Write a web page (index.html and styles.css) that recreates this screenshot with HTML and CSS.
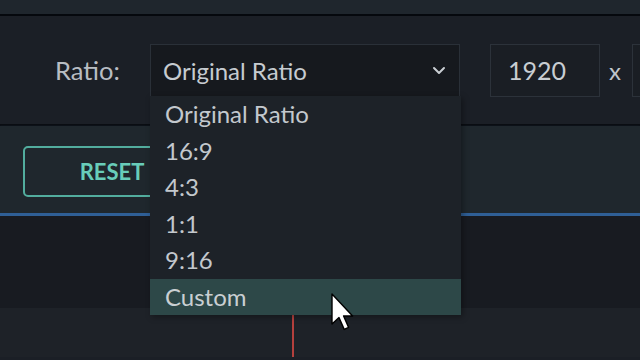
FILE: index.html
```html
<!DOCTYPE html>
<html>
  <head>
    <meta charset="utf-8">
    <title>Export settings</title>
    <link rel="stylesheet" href="styles.css">
  </head>
  <body>
    <div class="app">
      <div class="topbar"></div>

      <div class="panel">
        <span class="label">Ratio:</span>
        <div class="select">
          <span>Original Ratio</span>
          <svg class="chevron" width="14" height="9" viewBox="0 0 14 9">
            <path d="M2 2 L7 7 L12 2" fill="none" stroke="#c9ced3" stroke-width="2" stroke-linecap="round" stroke-linejoin="round"/>
          </svg>
        </div>
        <div class="num">1920</div>
        <span class="times">x</span>
        <div class="num"></div>
      </div>

      <div class="tools">
        <button class="reset">RESET</button>
      </div>
      <div class="timeline"></div>
      <div class="track">
        <div class="playhead"></div>
      </div>

      <!-- open dropdown list of the ratio select -->
      <ul class="menu">
        <li>Original Ratio</li>
        <li>16:9</li>
        <li>4:3</li>
        <li>1:1</li>
        <li>9:16</li>
        <li class="hover">Custom</li>
      </ul>

      <svg class="cursor" width="24" height="38" viewBox="0 0 12 19">
        <path d="M0.5 0.5 L0.5 15.5 L4 12.3 L6.6 18.2 L8.8 17.2 L6.3 11.5 L10.8 11.5 Z" fill="#fff" stroke="#000" stroke-width="0.7" stroke-linejoin="round"/>
      </svg>
    </div>
  </body>
</html>
```

FILE: styles.css
```css
body {
    margin: 0;
    background-color: #1b1f26;
    font-family: Lato, "Open Sans", sans-serif;
    overflow: hidden;
}

.app {
    position: relative;
    width: 640px;
    height: 360px;
    overflow: hidden;
}

.topbar {
    height: 14px;
    background-color: #1f262d;
    border-bottom: 2px solid #05080d;
}

.panel {
    display: flex;
    align-items: center;
    height: 108px;
    padding-left: 55px;
    background-color: #1b1f26;
    border-bottom: 2px solid #0b0e13;
}

.panel > * {
    flex-shrink: 0;
}

.label {
    width: 95px;
    font-size: 25.5px;
    color: #b8bdc3;
}

.select {
    display: flex;
    align-items: center;
    justify-content: space-between;
    box-sizing: border-box;
    width: 310px;
    height: 53px;
    padding: 0 12px 0 12px;
    background-color: #16191e;
    border: 1px solid #2a3038;
    font-size: 24px;
    color: #c6cbd0;
}

.chevron {
    margin-right: 1px;
}

.num {
    box-sizing: border-box;
    width: 110px;
    height: 53px;
    margin-left: 30px;
    padding-left: 17px;
    line-height: 51px;
    background-color: #1a1e24;
    border: 1px solid #2c323a;
    font-size: 25px;
    color: #c8cdd2;
}

.times {
    margin: 0 11px 0 9px;
    font-size: 24px;
    color: #c0c5cb;
}

.times + .num {
    margin-left: 0;
}

.tools {
    height: 90px;
    padding: 20px 0 0 23px;
    box-sizing: border-box;
    background-color: #1f272d;
    border-bottom: 3px solid #2f5f96;
    box-shadow: 0 1px 2px #1d3b5f;
}

.reset {
    width: 178px;
    height: 51px;
    background: none;
    border: 2px solid #52ad9e;
    border-radius: 5px;
    font-family: Lato, sans-serif;
    font-size: 22px;
    font-weight: bold;
    color: #68cdb9;
}

.timeline {
    height: 92px;
    background-color: #181b21;
}

.track {
    position: relative;
    height: 49px;
    background-color: #1e2228;
}

.playhead {
    position: absolute;
    left: 292px;
    top: 2px;
    width: 2px;
    height: 47px;
    background-color: #b4403d;
}

.menu {
    position: absolute;
    left: 150px;
    top: 96px;
    width: 311px;
    margin: 0;
    padding: 0;
    list-style: none;
    background-color: #1d2228;
    box-shadow: 2px 2px 6px rgba(0, 0, 0, 0.35);
}

.menu li {
    height: 36.5px;
    line-height: 36.5px;
    padding-left: 15px;
    font-size: 24px;
    color: #c3c8cd;
}

.menu li.hover {
    background-color: #2d4848;
    color: #c9cfd2;
}

.cursor {
    position: absolute;
    left: 331px;
    top: 293px;
}
```
